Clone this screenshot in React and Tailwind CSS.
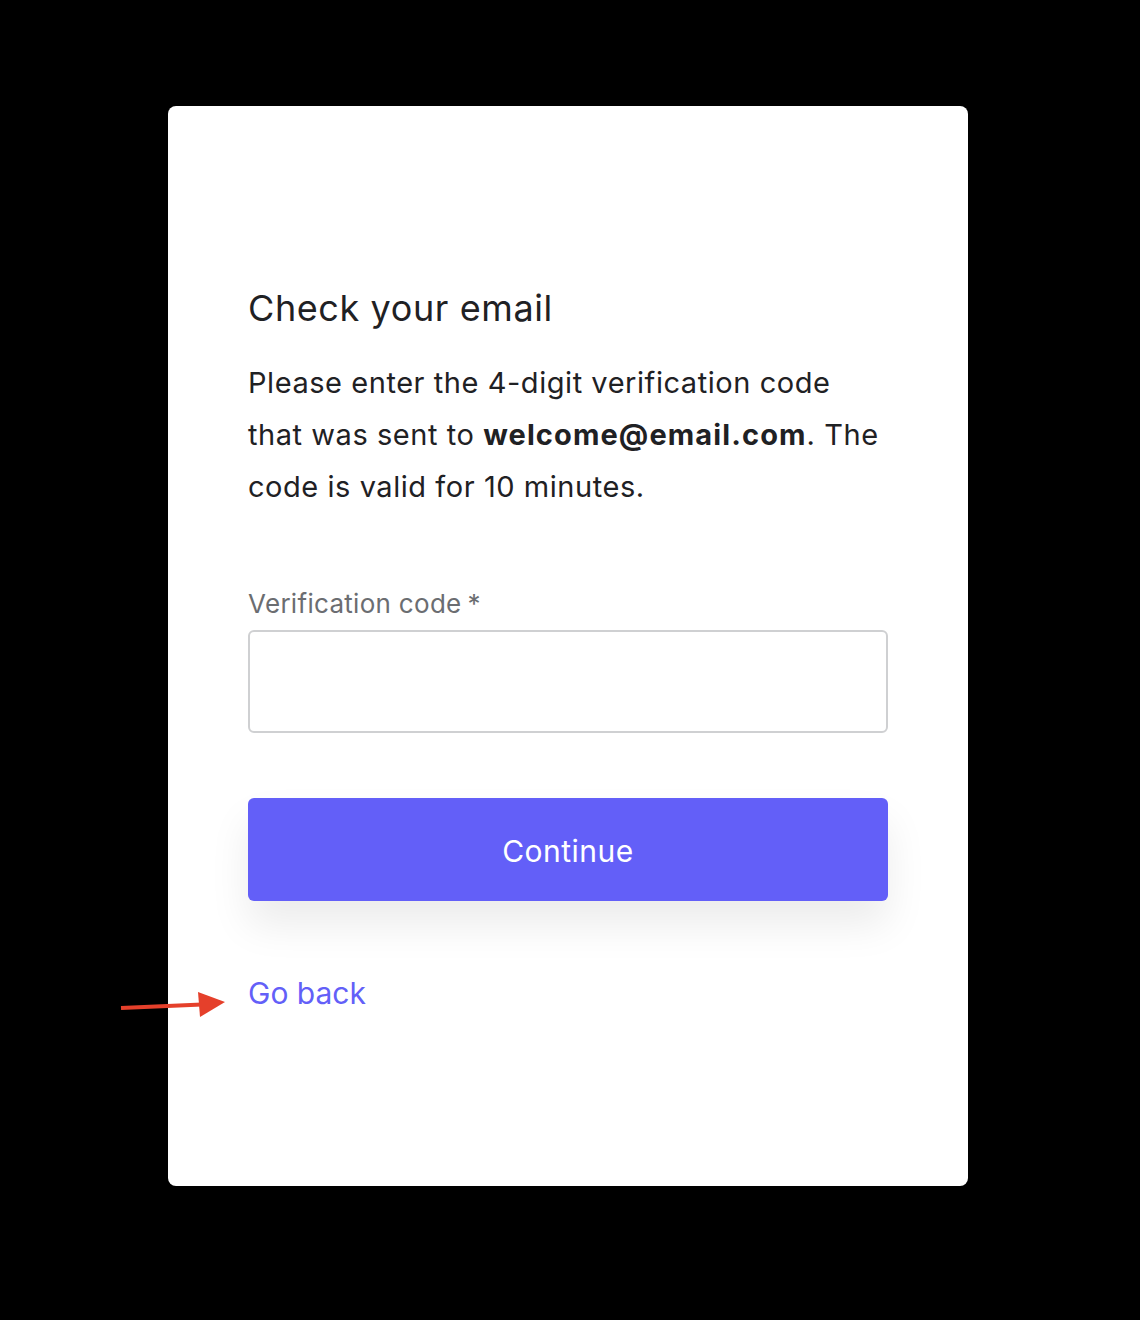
const App = () => {
  return (
    <div
      className="relative min-h-[1320px] w-full bg-black pt-[106px] pl-[168px]"
      style={{ fontFamily: "Inter, 'Noto Sans', sans-serif" }}
    >
      <div className="w-[800px] h-[1080px] bg-white rounded-[8px] px-[80px] pt-[180px]">
        <h1 className="text-[36px] leading-[44px] text-[#1f2124] tracking-[0.6px]">
          Check your email
        </h1>

        <p className="mt-[27px] text-[29px] leading-[52px] text-[#1f2124] tracking-[0.55px]">
          Please enter the 4-digit verification code that was sent to{" "}
          <strong className="font-bold tracking-[1.1px]">welcome@email.com</strong>. The code is valid for 10 minutes.
        </p>

        <label className="block mt-[73px] text-[26px] leading-[36px] text-[#6b6d71] tracking-[0.3px]">
          Verification code<span className="ml-[6px]">*</span>
        </label>
        <input
          type="text"
          className="block mt-[8px] w-full h-[103px] rounded-[6px] border-2 border-[#cfd0d2] bg-white outline-none"
        />

        <button className="mt-[65px] w-full h-[103px] pt-[3px] rounded-[6px] bg-[#635ff8] text-white text-[30px] tracking-[0.5px] shadow-[0_24px_40px_rgba(0,0,0,0.08)]">
          Continue
        </button>

        <a href="#" className="block mt-[72px] text-[30px] leading-[40px] text-[#635ff8]">
          Go back
        </a>
      </div>

      <svg
        className="absolute left-[118px] top-[988px]"
        width="112"
        height="32"
        viewBox="0 0 112 32"
      >
        <line x1="3" y1="20" x2="84" y2="16.5" stroke="#e5402b" strokeWidth="4" />
        <polygon points="80,4 107,14 82,29" fill="#e5402b" />
      </svg>
    </div>
  );
};

export default App;
